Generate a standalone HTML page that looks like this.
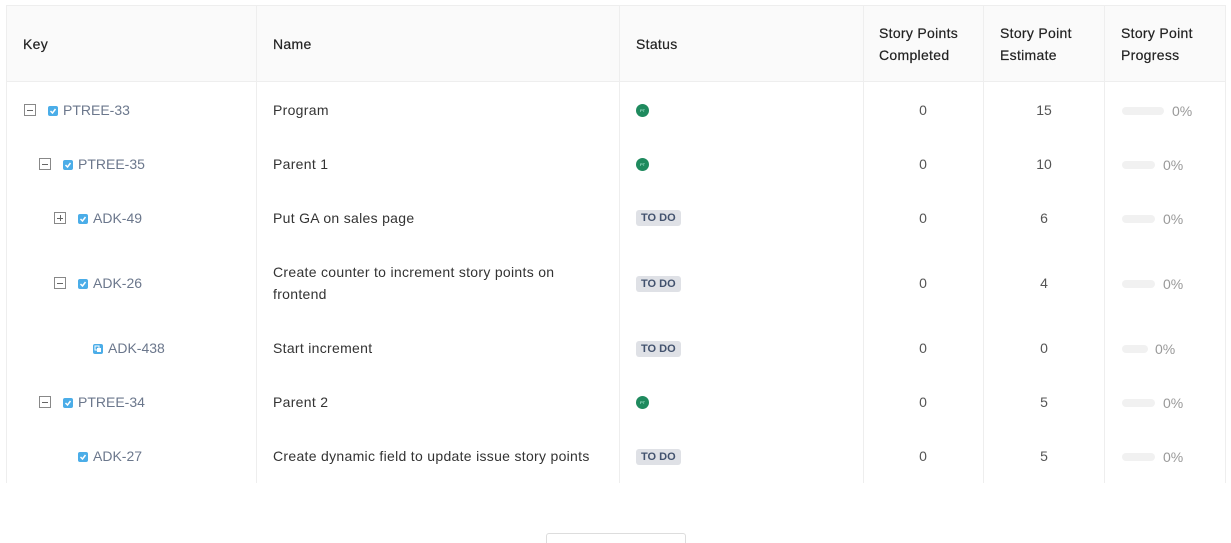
<!DOCTYPE html>
<html><head><style>
html,body{margin:0;width:1231px;height:543px;overflow:hidden}
body{background:#fff;font-family:"Liberation Sans",sans-serif;position:relative}
.abs{position:absolute}
.t{position:absolute;font-size:14px;color:#333;white-space:nowrap;line-height:22px;letter-spacing:0.3px}
.h{color:#222;-webkit-text-stroke:0.2px #222}
.k{position:absolute;font-size:14px;color:#6b778c;white-space:nowrap;line-height:20px}
.vl{position:absolute;width:1px;background:#eee;top:5px;height:478px}
.box{position:absolute;width:12px;height:12px;border:1px solid #888;background:#fff;box-sizing:border-box}
.box:before{content:"";position:absolute;left:2px;top:4.5px;width:6px;height:1px;background:#666}
.plus:after{content:"";position:absolute;left:4.5px;top:2px;width:1px;height:6px;background:#666}
.chk{position:absolute;width:10px;height:10px;background:#4bade8;border-radius:2px}
.chk svg{position:absolute;left:0;top:0}
.todo{position:absolute;background:#dfe1e6;color:#42526e;font-size:11px;font-weight:bold;padding:0 5px;height:16px;line-height:16px;border-radius:3px}
.av{position:absolute;width:13px;height:13px;border-radius:50%;background:#1f8a5e;color:#cfe;font-size:4px;text-align:center;line-height:13px}
.n{position:absolute;font-size:14px;color:#555;text-align:center}
.bar{position:absolute;height:8px;border-radius:4px;background:#f1f1f1}
.pc{position:absolute;font-size:14px;color:#999}
</style></head><body>
<div class="abs" style="left:6px;top:5px;width:1220px;height:77px;background:#fafafa;border-top:1px solid #eee;border-bottom:1px solid #eee;box-sizing:border-box"></div>
<div class="vl" style="left:6px"></div><div class="vl" style="left:256px"></div><div class="vl" style="left:619px"></div><div class="vl" style="left:863px"></div><div class="vl" style="left:983px"></div><div class="vl" style="left:1104px"></div><div class="vl" style="left:1225px"></div>
<div class="t h" style="left:23px;top:33px">Key</div>
<div class="t h" style="left:273px;top:33px">Name</div>
<div class="t h" style="left:636px;top:33px">Status</div>
<div class="t h" style="left:879px;top:22px">Story Points<br>Completed</div>
<div class="t h" style="left:1000px;top:22px">Story Point<br>Estimate</div>
<div class="t h" style="left:1121px;top:22px">Story Point<br>Progress</div>

<div class="box" style="left:24px;top:104px"></div>
<div class="chk" style="left:48px;top:106px"><svg width="10" height="10"><path d="M2.5 5l2 2 3-4" stroke="#fff" stroke-width="1.5" fill="none"/></svg></div>
<div class="k" style="left:63px;top:100px">PTREE-33</div>
<div class="t" style="left:273px;top:99px">Program</div>
<div class="av" style="left:636px;top:104px">PT</div>
<div class="n" style="left:903px;width:40px;top:102px">0</div><div class="n" style="left:1024px;width:40px;top:102px">15</div>
<div class="bar" style="left:1122px;top:107px;width:42px"></div><div class="pc" style="left:1172px;top:103px">0%</div>

<div class="box" style="left:39px;top:158px"></div>
<div class="chk" style="left:63px;top:160px"><svg width="10" height="10"><path d="M2.5 5l2 2 3-4" stroke="#fff" stroke-width="1.5" fill="none"/></svg></div>
<div class="k" style="left:78px;top:154px">PTREE-35</div>
<div class="t" style="left:273px;top:153px">Parent 1</div>
<div class="av" style="left:636px;top:158px">PT</div>
<div class="n" style="left:903px;width:40px;top:156px">0</div><div class="n" style="left:1024px;width:40px;top:156px">10</div>
<div class="bar" style="left:1122px;top:161px;width:33px"></div><div class="pc" style="left:1163px;top:157px">0%</div>

<div class="box plus" style="left:54px;top:212px"></div>
<div class="chk" style="left:78px;top:214px"><svg width="10" height="10"><path d="M2.5 5l2 2 3-4" stroke="#fff" stroke-width="1.5" fill="none"/></svg></div>
<div class="k" style="left:93px;top:208px">ADK-49</div>
<div class="t" style="left:273px;top:207px">Put GA on sales page</div>
<div class="todo" style="left:636px;top:210px">TO DO</div>
<div class="n" style="left:903px;width:40px;top:210px">0</div><div class="n" style="left:1024px;width:40px;top:210px">6</div>
<div class="bar" style="left:1122px;top:215px;width:33px"></div><div class="pc" style="left:1163px;top:211px">0%</div>

<div class="box" style="left:54px;top:277px"></div>
<div class="chk" style="left:78px;top:279px"><svg width="10" height="10"><path d="M2.5 5l2 2 3-4" stroke="#fff" stroke-width="1.5" fill="none"/></svg></div>
<div class="k" style="left:93px;top:273px">ADK-26</div>
<div class="t" style="left:273px;top:261px">Create counter to increment story points on<br>frontend</div>
<div class="todo" style="left:636px;top:276px">TO DO</div>
<div class="n" style="left:903px;width:40px;top:275px">0</div><div class="n" style="left:1024px;width:40px;top:275px">4</div>
<div class="bar" style="left:1122px;top:280px;width:33px"></div><div class="pc" style="left:1163px;top:276px">0%</div>

<div class="chk" style="left:93px;top:344px"><svg width="10" height="10"><rect x="2" y="2" width="4" height="4" fill="none" stroke="#fff"/><rect x="4" y="4" width="4" height="4" fill="#fff"/></svg></div>
<div class="k" style="left:108px;top:338px">ADK-438</div>
<div class="t" style="left:273px;top:337px">Start increment</div>
<div class="todo" style="left:636px;top:341px">TO DO</div>
<div class="n" style="left:903px;width:40px;top:340px">0</div><div class="n" style="left:1024px;width:40px;top:340px">0</div>
<div class="bar" style="left:1122px;top:345px;width:26px"></div><div class="pc" style="left:1155px;top:341px">0%</div>

<div class="box" style="left:39px;top:396px"></div>
<div class="chk" style="left:63px;top:398px"><svg width="10" height="10"><path d="M2.5 5l2 2 3-4" stroke="#fff" stroke-width="1.5" fill="none"/></svg></div>
<div class="k" style="left:78px;top:392px">PTREE-34</div>
<div class="t" style="left:273px;top:391px">Parent 2</div>
<div class="av" style="left:636px;top:396px">PT</div>
<div class="n" style="left:903px;width:40px;top:394px">0</div><div class="n" style="left:1024px;width:40px;top:394px">5</div>
<div class="bar" style="left:1122px;top:399px;width:33px"></div><div class="pc" style="left:1163px;top:395px">0%</div>

<div class="chk" style="left:78px;top:452px"><svg width="10" height="10"><path d="M2.5 5l2 2 3-4" stroke="#fff" stroke-width="1.5" fill="none"/></svg></div>
<div class="k" style="left:93px;top:446px">ADK-27</div>
<div class="t" style="left:273px;top:445px">Create dynamic field to update issue story points</div>
<div class="todo" style="left:636px;top:449px">TO DO</div>
<div class="n" style="left:903px;width:40px;top:448px">0</div><div class="n" style="left:1024px;width:40px;top:448px">5</div>
<div class="bar" style="left:1122px;top:453px;width:33px"></div><div class="pc" style="left:1163px;top:449px">0%</div>

<div class="abs" style="left:546px;top:533px;width:140px;height:30px;border:1px solid #ddd;border-radius:3px;box-sizing:border-box"></div>
</body></html>
